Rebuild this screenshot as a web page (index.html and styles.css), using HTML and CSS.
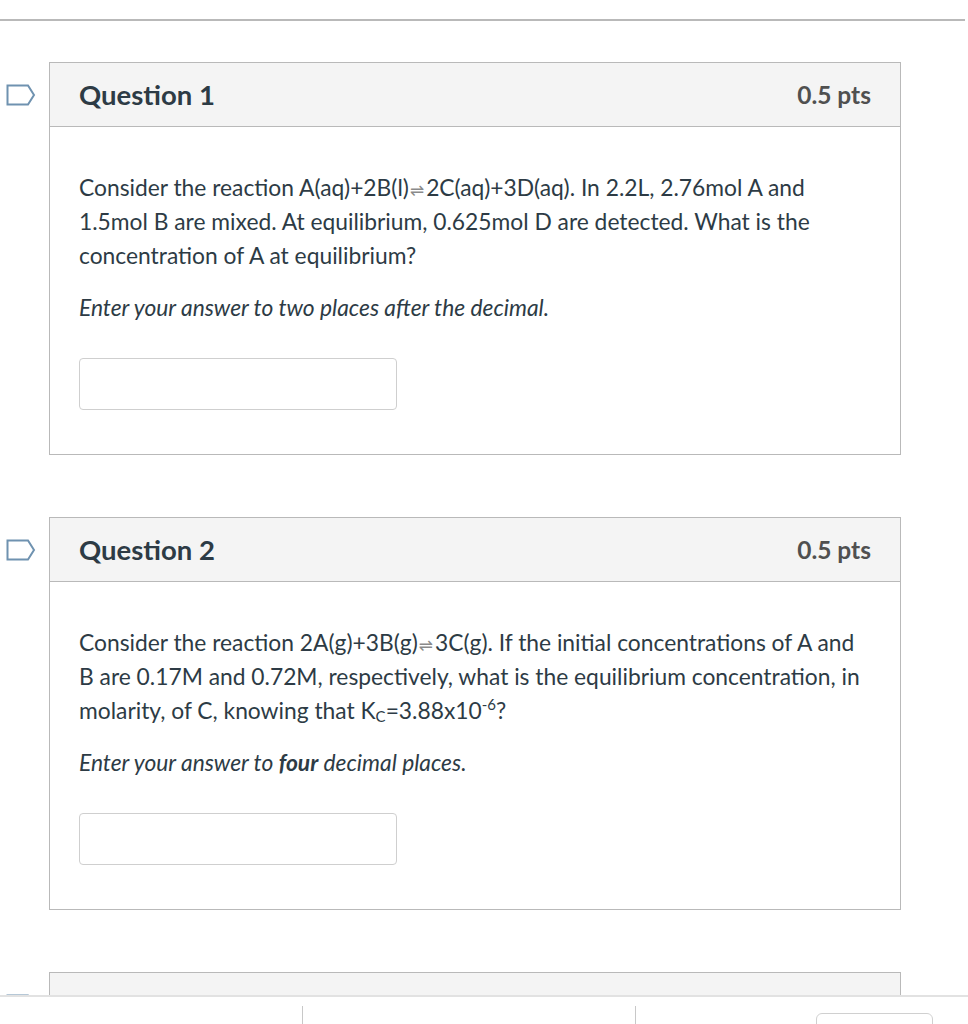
FILE: index.html
```html
<!DOCTYPE html>
<html lang="en">
<head>
<meta charset="utf-8">
<title>Quiz</title>
<link rel="stylesheet" href="styles.css">
</head>
<body>
<div class="topline"></div>
<main class="questions">
  <section class="question">
    <svg class="flag" width="30" height="22" viewBox="0 0 30 22" aria-hidden="true"><polygon points="1.5,1.5 22,1.5 28,11 22,20.5 1.5,20.5" fill="#fff" stroke="#6f92b0" stroke-width="2"/></svg>
    <div class="card">
      <header class="card-head">
        <h2 class="q-title">Question 1</h2>
        <span class="pts">0.5 pts</span>
      </header>
      <div class="card-body">
        <p class="q-text">Consider the reaction A(aq)+2B(l)<span class="eq">⇌</span>2C(aq)+3D(aq). In 2.2L, 2.76mol A and 1.5mol B are mixed. At equilibrium, 0.625mol D are detected. What is the concentration of A at equilibrium?</p>
        <p class="q-note">Enter your answer to two places after the decimal.</p>
        <input class="answer" type="text" aria-label="Answer">
      </div>
    </div>
  </section>
  <section class="question">
    <svg class="flag" width="30" height="22" viewBox="0 0 30 22" aria-hidden="true"><polygon points="1.5,1.5 22,1.5 28,11 22,20.5 1.5,20.5" fill="#fff" stroke="#6f92b0" stroke-width="2"/></svg>
    <div class="card">
      <header class="card-head">
        <h2 class="q-title">Question 2</h2>
        <span class="pts">0.5 pts</span>
      </header>
      <div class="card-body">
        <p class="q-text">Consider the reaction 2A(g)+3B(g)<span class="eq">⇌</span>3C(g). If the initial concentrations of A and B are 0.17M and 0.72M, respectively, what is the equilibrium concentration, in molarity, of C, knowing that K<sub class="sub">C</sub>=3.88x10<sup class="sup">-6</sup>?</p>
        <p class="q-note">Enter your answer to <strong>four</strong> decimal places.</p>
        <input class="answer" type="text" aria-label="Answer">
      </div>
    </div>
  </section>
  <section class="question">
    <svg class="flag" width="30" height="22" viewBox="0 0 30 22" aria-hidden="true"><polygon points="1.5,1.5 22,1.5 28,11 22,20.5 1.5,20.5" fill="#fff" stroke="#6f92b0" stroke-width="2"/></svg>
    <div class="card">
      <header class="card-head">
        <h2 class="q-title">Question 3</h2>
        <span class="pts">0.5 pts</span>
      </header>
      <div class="card-body">
        <p class="q-text">&nbsp;</p>
      </div>
    </div>
  </section>
</main>
<footer class="bottombar">
  <span class="sep sep1"></span>
  <span class="sep sep2"></span>
  <span class="btn"></span>
</footer>
</body>
</html>
```
FILE: styles.css
```css
html, body {
  margin: 0;
  padding: 0;
  background: #fff;
}
body {
  font-family: Lato, "Open Sans", "Liberation Sans", sans-serif;
  color: #2d3b45;
  height: 1024px;
  overflow: hidden;
}
.topline {
  margin-top: 19px;
  width: 965px;
  height: 2px;
  background: #b9b9b9;
}
.questions {
  display: flex;
  flex-direction: column;
  gap: 62px;
  padding-top: 41px;
}
.question {
  position: relative;
  padding-left: 49px;
}
.flag {
  position: absolute;
  left: 6px;
  top: 22px;
}
.card {
  width: 850px;
  border: 1px solid #b9b9b9;
}
.card-head {
  display: flex;
  align-items: center;
  justify-content: space-between;
  height: 64px;
  box-sizing: border-box;
  padding: 0 29px 0 29px;
  background: #f4f4f4;
  border-bottom: 1px solid #b9b9b9;
}
.q-title {
  margin: 0;
  font-size: 27.5px;
  font-weight: 700;
  color: #2d3b45;
}
.pts {
  font-size: 24.5px;
  font-weight: 700;
  color: #505050;
}
.card-body {
  padding: 43px 29px 44px 29px;
}
.q-text {
  margin: 0;
  font-size: 22.8px;
  line-height: 34px;
  max-width: 792px;
}
.eq {
  color: #8a8a8a;
  font-family: "DejaVu Sans", sans-serif;
  font-size: 17px;
  line-height: 0;
  margin: 0 2px 0 1px;
}
.sub {
  font-size: 15px;
  vertical-align: -3px;
  line-height: 0;
}
.sup {
  font-size: 15px;
  vertical-align: 9px;
  line-height: 0;
}
.q-note {
  margin: 18px 0 0 0;
  font-size: 22.8px;
  line-height: 34px;
  font-style: italic;
}
.q-note strong {
  font-weight: 700;
}
.answer {
  display: block;
  margin-top: 34px;
  width: 318px;
  height: 52px;
  box-sizing: border-box;
  border: 1px solid #cfcfcf;
  border-radius: 4px;
  background: #fff;
  padding: 0 10px;
  font: inherit;
}
.bottombar {
  position: fixed;
  left: 0;
  right: 0;
  bottom: 0;
  height: 27px;
  background: #fff;
  border-top: 2px solid #e2e2e2;
}
.sep {
  position: absolute;
  top: 9px;
  bottom: 0;
  width: 1px;
  background: #c8c8c8;
}
.sep1 { left: 302px; }
.sep2 { left: 635px; }
.btn {
  position: absolute;
  left: 816px;
  top: 16px;
  width: 115px;
  height: 30px;
  border: 1px solid #d0d0d0;
  border-radius: 6px;
}
```
